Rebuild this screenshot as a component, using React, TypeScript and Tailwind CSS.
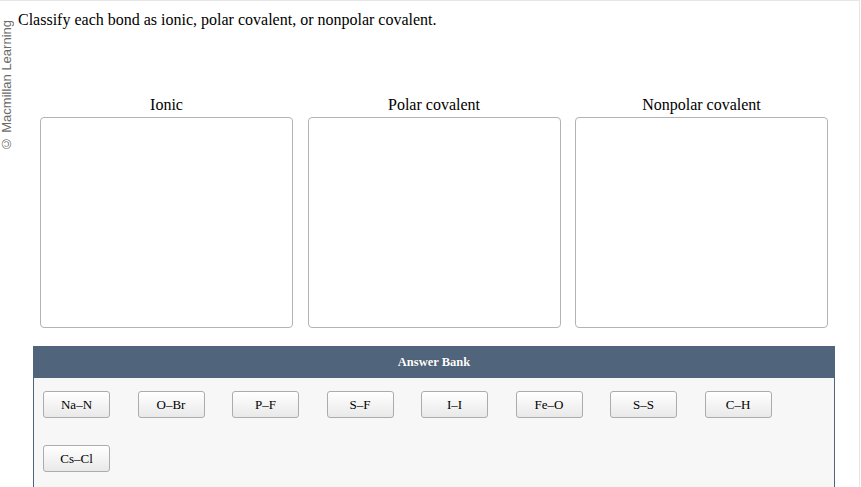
const bins = ['Ionic', 'Polar covalent', 'Nonpolar covalent'];

const bank = ['Na\u2013N', 'O\u2013Br', 'P\u2013F', 'S\u2013F', 'I\u2013I', 'Fe\u2013O', 'S\u2013S', 'C\u2013H', 'Cs\u2013Cl'];

export default function App() {
  return (
    <div className="w-[861px] h-[487px] overflow-hidden bg-white">
      <div className="flex h-full w-[860px] border-t border-r border-[#e6e6e6] font-['Liberation_Serif','Times_New_Roman',serif] text-black">
        {/* copyright strip */}
        <div className="w-[14px] shrink-0 pt-[19px]">
          <span className="block [writing-mode:vertical-rl] rotate-180 text-[13px] leading-[13px] text-[#6b6b6b] font-['Liberation_Sans','Arial',sans-serif]">
            © Macmillan Learning
          </span>
        </div>

        <div className="flex-1 flex flex-col">
          <p className="pt-[9px] pl-[4px] text-[16px] leading-[19px]">
            Classify each bond as ionic, polar covalent, or nonpolar covalent.
          </p>

          {/* drop targets */}
          <div className="mt-[66px] ml-[26px] grid grid-cols-3 w-[788px] gap-x-[14.5px]">
            {bins.map((label) => (
              <div key={label} className="flex flex-col items-center">
                <div className="text-[16px] leading-[19px] h-[22px]">{label}</div>
                <div className="w-full h-[211px] rounded-[4px] border border-[#b3b3b3] bg-white" />
              </div>
            ))}
          </div>

          {/* answer bank */}
          <div className="mt-[18px] ml-[19px] w-[802px] flex-1 flex flex-col">
            <div className="h-[32px] bg-[#50647c] flex items-center justify-center text-white font-bold text-[12.5px] [text-shadow:0_0_1px_rgba(0,0,0,0.3)]">
              Answer Bank
            </div>
            <div className="flex-1 bg-[#f7f7f7] border-x border-[#50647c] pt-[13px] pl-[9px] flex flex-wrap content-start gap-x-[27.5px] gap-y-[27px]">
              {bank.map((item) => (
                <div
                  key={item}
                  className="w-[67px] h-[27px] rounded-[3px] border border-[#acacac] bg-gradient-to-b from-white to-[#e9e9e9] flex items-center justify-center text-[13px] leading-none"
                >
                  {item}
                </div>
              ))}
            </div>
          </div>
        </div>
      </div>
    </div>
  );
}
